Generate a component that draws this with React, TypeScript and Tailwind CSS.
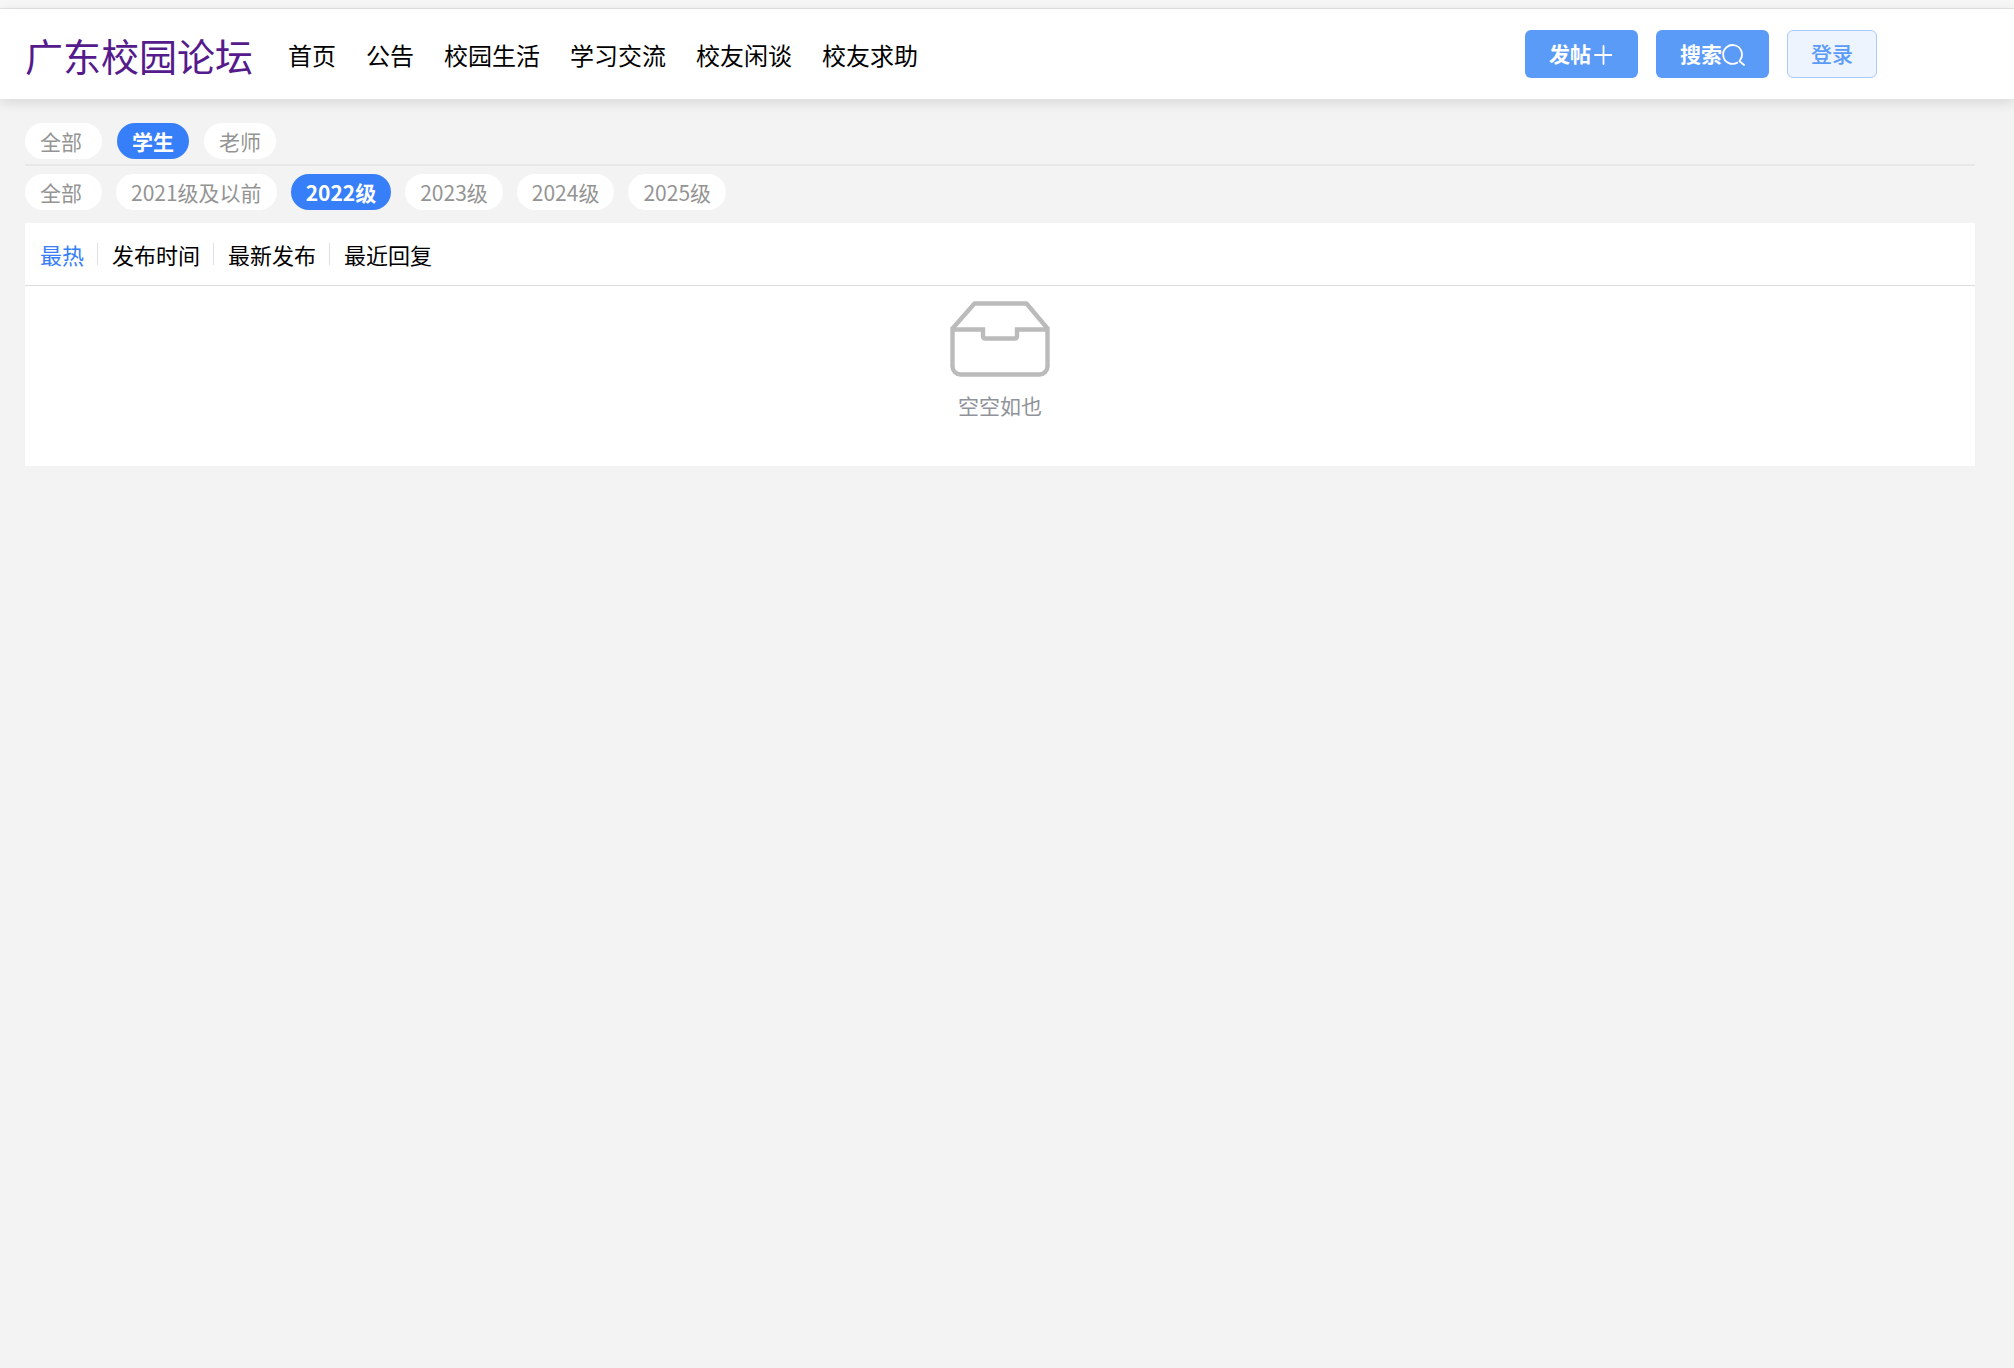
import { FunctionComponent } from "react";

type ChipType = {
  label: string;
  active?: boolean;
  className?: string;
};

const navItems = ["首页", "公告", "校园生活", "学习交流", "校友闲谈", "校友求助"];
const roles = ["学生", "老师"];
const grades = ["2021级及以前", "2022级", "2023级", "2024级", "2025级"];
const sorts = ["最热", "发布时间", "最新发布", "最近回复"];

const Chip: FunctionComponent<ChipType> = ({ label, active, className = "pr-[15px]" }) => {
  return (
    <button
      type="button"
      aria-pressed={!!active}
      className={`h-9 rounded-full pl-[15px] text-[21px] leading-9 ${className} ${
        active ? "bg-[#377ef9] font-bold text-white" : "bg-white text-[#949494]"
      }`}
    >
      {label}
    </button>
  );
};

const PlusIcon = () => (
  <svg className="h-[21px] w-[21px]" viewBox="0 0 21 21" fill="none" stroke="currentColor" strokeWidth="1.8" strokeLinecap="round" aria-hidden="true">
    <path d="M12.5 2v18M4 11h18" />
  </svg>
);

const SearchIcon = () => (
  <svg className="h-[21px] w-[21px] overflow-visible" viewBox="0 0 21 21" fill="none" stroke="currentColor" strokeWidth="1.8" strokeLinecap="round" aria-hidden="true">
    <path d="M15.3 18.6A9.4 9.4 0 1 1 17.7 16.6M17.5 17.2L22.1 21" />
  </svg>
);

const EmptyIcon = () => (
  <svg className="h-[76px] w-[100px]" viewBox="0 0 100 76" fill="none" stroke="#bbbbbb" strokeWidth="4.4" aria-hidden="true">
    <path d="M2.5 27.5L24.5 2.5H76.5L97.5 27.5" strokeLinejoin="round" />
    <path d="M2.5 26V65.5A8 8 0 0 0 10.5 73.5H89.5A8 8 0 0 0 97.5 65.5V26" />
    <path d="M2.5 28.5H33V35.5A2 2 0 0 0 35 37.5H65A2 2 0 0 0 67 35.5V28.5H97.5" />
  </svg>
);

const Header = () => (
  <header className="relative flex h-[90px] items-center justify-between bg-white pt-[2px] pr-[137px] pl-[25px] shadow-[0_3px_12px_rgba(0,0,0,0.12)]">
    <div className="flex items-center gap-[35px]">
      <a href="#" className="text-[38px] leading-[54px] text-[#551a8b]">
        广东校园论坛
      </a>
      <nav className="flex gap-[30px] text-2xl text-black">
        {navItems.map((item) => (
          <a key={item} href="#">
            {item}
          </a>
        ))}
      </nav>
    </div>
    <div className="mb-[2px] flex gap-[18px] text-[21px] font-bold">
      <button type="button" className="flex h-12 items-center rounded-md bg-[#5b9bf8] pr-[26px] pl-6 text-white">
        发帖
        <PlusIcon />
      </button>
      <button type="button" className="flex h-12 items-center rounded-md bg-[#5b9bf8] pr-[26px] pl-6 text-white">
        搜索
        <SearchIcon />
      </button>
      <button type="button" className="h-12 rounded-md border border-[#a6cbfb] bg-[#edf4fe] px-[23px] font-medium text-[#5b9bf8]">
        登录
      </button>
    </div>
  </header>
);

const App: FunctionComponent = () => {
  return (
    <div className="min-h-screen bg-[#f3f3f3] font-['Noto_Sans_CJK_SC',sans-serif]">
      <div className="h-[9px] border-b border-[#e5e5e5] bg-[#f7f7f7]" />
      <Header />
      <main className="pt-6 pr-[39px] pl-[25px]">
        <div className="flex gap-[15px] border-b-2 border-[#e8e8e8] pb-[5px]">
          <Chip label="全部" className="pr-5" />
          {roles.map((role) => (
            <Chip key={role} label={role} active={role === "学生"} />
          ))}
        </div>
        <div className="flex gap-[14px] pt-2">
          <Chip label="全部" className="pr-5" />
          {grades.map((grade) => (
            <Chip key={grade} label={grade} active={grade === "2022级"} />
          ))}
        </div>
        <section className="mt-[13px] bg-white">
          <div className="flex h-[63px] items-center border-b border-[#dcdcdc] px-[15px] text-[22px]">
            {sorts.map((sort, i) => (
              <div key={sort} className="flex items-center">
                {i > 0 && <span className="mr-[14px] ml-[13px] h-[22px] w-px bg-[#dcdfe6]" />}
                <button type="button" className={i === 0 ? "text-[#377ef9]" : "text-black"}>
                  {sort}
                </button>
              </div>
            ))}
          </div>
          <div className="flex flex-col items-center gap-3 pt-[15px] pb-[45px]">
            <EmptyIcon />
            <p className="text-[21px] leading-8 text-[#909399]">空空如也</p>
          </div>
        </section>
      </main>
    </div>
  );
};

export default App;
